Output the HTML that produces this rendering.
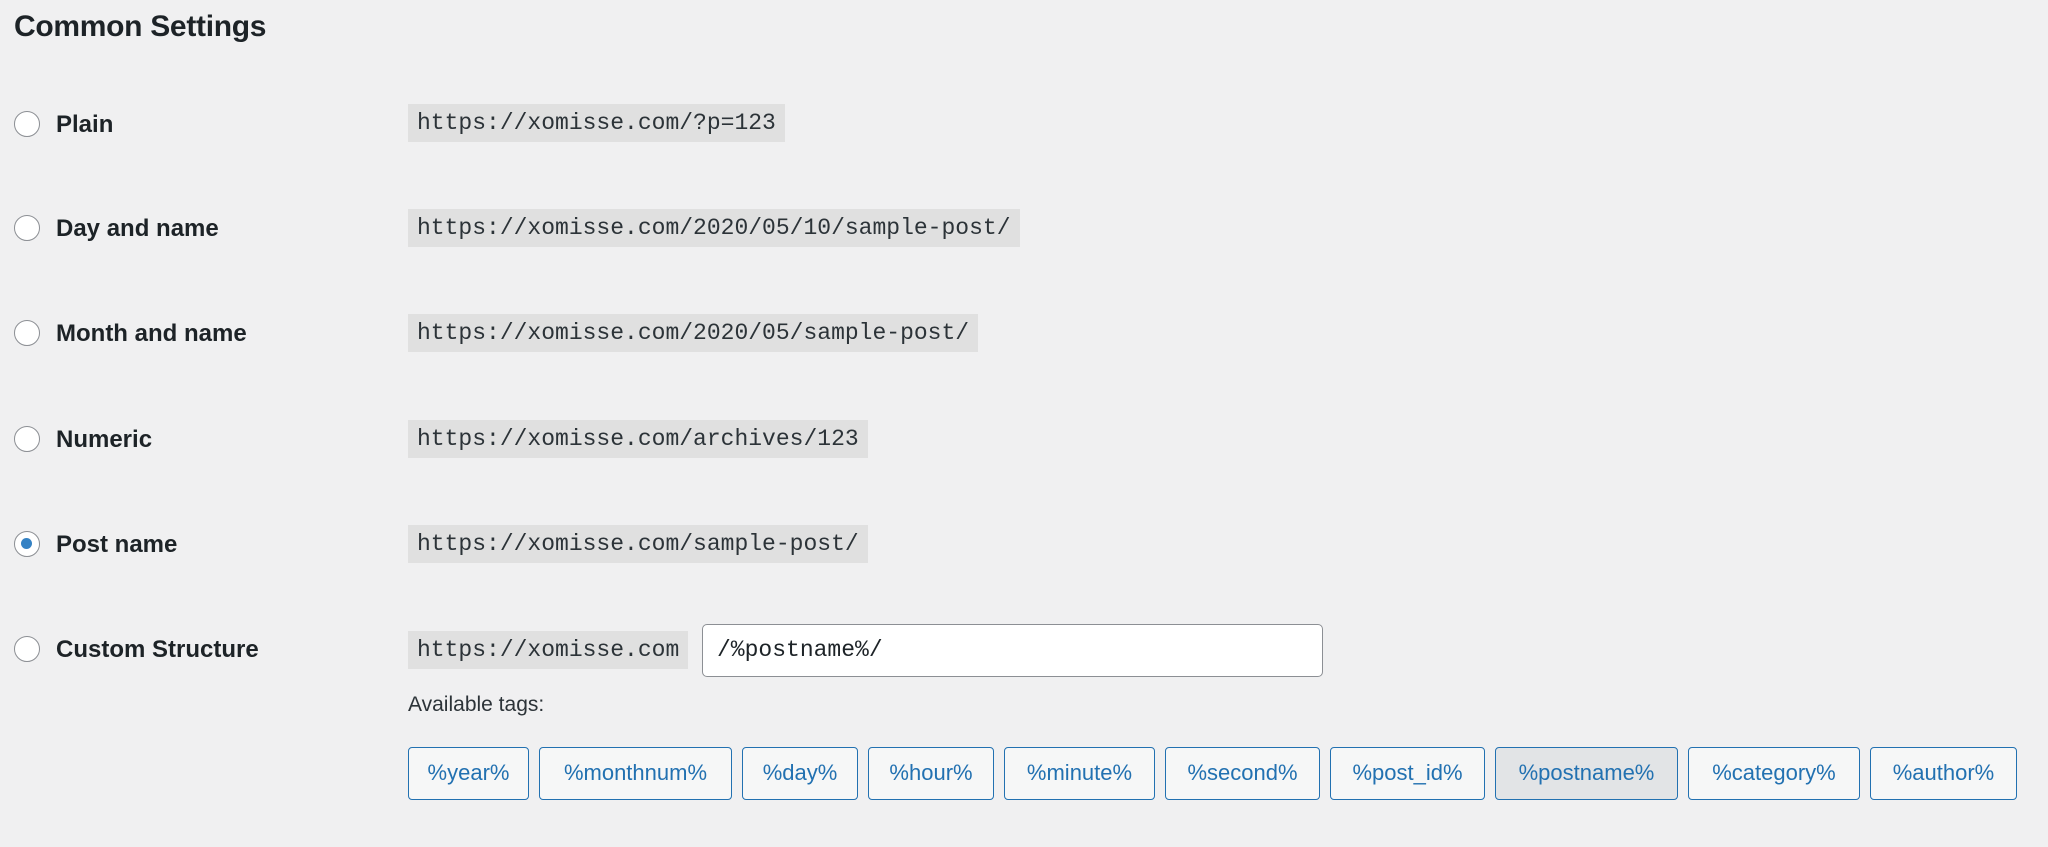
<!DOCTYPE html>
<html><head><style>
body{margin:0;width:2048px;height:847px;background:#f0f0f1;font-family:"Liberation Sans",sans-serif;color:#1d2327;position:relative;overflow:hidden}
.a{position:absolute}
h2{position:absolute;left:14px;top:10px;margin:0;font-size:30px;font-weight:bold;letter-spacing:-0.3px}
.r{position:absolute;left:14px;width:26px;height:26px;border:1.5px solid #8c8f94;border-radius:50%;background:#fff;box-sizing:border-box}
.r.on::after{content:"";position:absolute;left:6px;top:6px;width:11px;height:11px;border-radius:50%;background:#3582c4}
.l{position:absolute;left:56px;font-size:24px;font-weight:bold;line-height:28px}
.c{position:absolute;left:408px;height:38px;line-height:38px;background:#e0e0e0;font-family:"Liberation Mono",monospace;font-size:23px;padding:0 9px;color:#2c3338}
.b{position:absolute;top:747px;height:53px;box-sizing:border-box;border:1.5px solid #2271b1;border-radius:4px;background:#f6f7f7;color:#2271b1;font-size:22px;text-align:center;line-height:50px}
</style></head><body>
<h2>Common Settings</h2>
<div class="r" style="top:111px"></div><div class="l" style="top:111px">Plain</div>
<div class="c" style="top:104px">https://xomisse.com/?p=123</div>
<div class="r" style="top:215px"></div><div class="l" style="top:215px">Day and name</div>
<div class="c" style="top:209px">https://xomisse.com/2020/05/10/sample-post/</div>
<div class="r" style="top:320px"></div><div class="l" style="top:320px">Month and name</div>
<div class="c" style="top:314px">https://xomisse.com/2020/05/sample-post/</div>
<div class="r" style="top:426px"></div><div class="l" style="top:426px">Numeric</div>
<div class="c" style="top:420px">https://xomisse.com/archives/123</div>
<div class="r on" style="top:531px"></div><div class="l" style="top:531px">Post name</div>
<div class="c" style="top:525px">https://xomisse.com/sample-post/</div>
<div class="r" style="top:636px"></div><div class="l" style="top:636px">Custom Structure</div>
<div class="c" style="top:631px">https://xomisse.com</div>
<div class="a" style="left:702px;top:624px;width:621px;height:53px;box-sizing:border-box;border:1.5px solid #8c8f94;border-radius:5px;background:#fff;font-family:'Liberation Mono',monospace;font-size:23px;line-height:50px;padding-left:14px">/%postname%/</div>
<div class="a" style="left:408px;top:693px;font-size:21px;color:#2c3338">Available tags:</div>
<div class="b" style="left:408px;width:121px">%year%</div>
<div class="b" style="left:539px;width:193px">%monthnum%</div>
<div class="b" style="left:742px;width:116px">%day%</div>
<div class="b" style="left:868px;width:126px">%hour%</div>
<div class="b" style="left:1004px;width:151px">%minute%</div>
<div class="b" style="left:1165px;width:155px">%second%</div>
<div class="b" style="left:1330px;width:155px">%post_id%</div>
<div class="b" style="left:1495px;width:183px;background:#e2e4e6">%postname%</div>
<div class="b" style="left:1688px;width:172px">%category%</div>
<div class="b" style="left:1870px;width:147px">%author%</div>
</body></html>
